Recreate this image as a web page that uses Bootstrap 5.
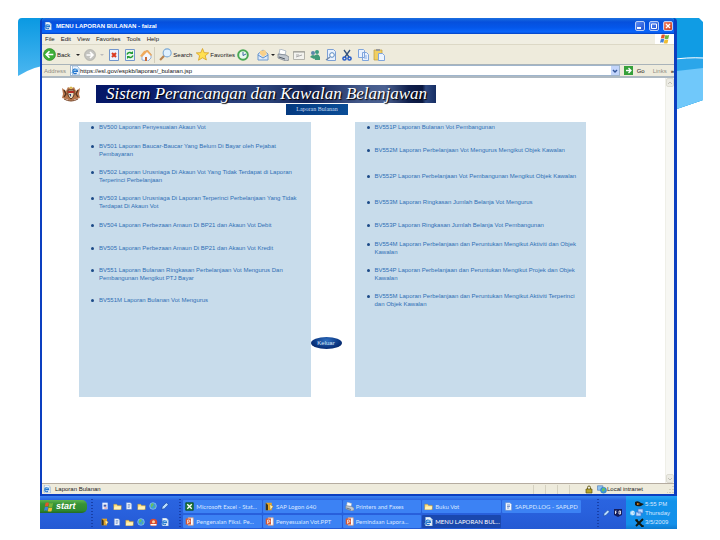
<!DOCTYPE html>
<html lang="ms">
<head>
<meta charset="utf-8">
<meta name="viewport" content="width=device-width, initial-scale=1">
<title>MENU LAPORAN BULANAN</title>
<link href="https://cdn.jsdelivr.net/npm/bootstrap@5.3.0/dist/css/bootstrap.min.css" rel="stylesheet">
<style>
body{font-family:"Liberation Sans",Arial,sans-serif;font-size:6px;line-height:8px;color:#222;background:#fff}
a{text-decoration:none;color:inherit}
button{font:inherit;color:inherit;border:0;background:none;padding:0}
svg{display:block;flex:none}
.slide{padding:18px 43px 11px 40px}
.backdrop{position:absolute;top:18px;left:18px;right:17px;height:92px;z-index:-1}
.win{border:solid #0c3fc0;border-width:0 3px 2px 2px;border-radius:4px 4px 0 0}
.titlebar{height:16px;padding:0 1px 0 2px;background:linear-gradient(#1b6fe0 0,#0650dc 25%,#0457ea 60%,#0a66fb 88%,#0340c0);border-radius:4px 4px 0 0;color:#fff;font-weight:bold}
.winbtn{width:10px;height:10px;border:1px solid #b9cdf6;border-radius:2px;background:linear-gradient(135deg,#5c8df5,#1d4fd0)}
.winbtn.shut{background:linear-gradient(135deg,#f0866a,#cc3a1c)}
.beige{background:#eeebdc}
.menubar{height:11px;background:#f0eee2;border-bottom:1px solid #dcd8c6}
.menubar nav{padding-left:3px;gap:6px}
.flagbox{width:19px;background:#fff}
.toolbar{height:20px;padding-left:1px;border-bottom:1px solid #a9b3b9}
.tb{width:16px;height:16px;display:flex;align-items:center;justify-content:center}
.tb.wide{width:auto;justify-content:flex-start;gap:1px}
.drop{width:8px;height:16px;display:flex;align-items:center;justify-content:center}
.drop.slim{width:4px}
.drop::before{content:"";border:solid transparent;border-width:2px 2px 0;border-top-color:#222}
.drop.dim::before{border-top-color:#bbb}
.vline{width:1px;height:16px;background:#d3cfbd}
.addr{height:13px;padding-left:2px;border-bottom:2px solid #aeb9c2}
.addr label,.dimtext{color:#8f8d84}
.urlbox{height:11px;border:1px solid #9fb5cc;background:#fff}
.urlbox input{border:0;padding:0;background:transparent;font-size:6px;line-height:8px;min-width:0;color:#111;outline:0}
.listbtn{width:8px;height:9px;background:#c3d5fb;display:flex;align-items:center;justify-content:center}
.page{background:#fff}
.sheet{padding:7px 79px 0 19px}
.banner{margin-left:15px;width:340px;height:18px;padding-left:10px;font:italic 17px/18px "Liberation Serif","Times New Roman",serif;color:#fff;text-shadow:1px 1px 1px #000;white-space:nowrap;background:linear-gradient(90deg,#051767 0,#071a6b 15%,#253a7c 30%,#2b4379 50%,#142458 62%,#43598a 78%,#4b6191 85%,#101f4c 92%,#0b1840 96%,#2e4880 97%,#162d63)}
.crumb{width:62px;height:11px;background:linear-gradient(90deg,#053a80,#0a4d97);color:#c9dcf2;font:6px/11px "Liberation Serif",serif;text-align:center}
.crumbrow{padding:1px 13px 0 0}
.lists{padding:7px 0 0 18px}
.panel{flex:1 1 0;height:275px;margin:0;padding:0 4px 0 12px;list-style:none;background:#c8dceb;color:#2f6fb5;display:grid;grid-template-rows:15px 26px 26px 26px 20px 26px 26px 26px;align-items:center}
.panel li:first-child{align-self:start;padding-top:1px}
.panel li{display:flex;gap:5px}
.panel li::before{content:"";flex:none;width:3px;height:3px;margin-top:3px;border-radius:50%;background:#1c4a87}
.middle{width:44px;padding-top:215px}
.exit{width:31px;height:12px;border-radius:50%;background:radial-gradient(ellipse at 50% 30%,#2e6fc0,#0a3580 60%,#041c52);color:#dbe8fa;line-height:12px;text-align:center}
.scroll{width:9px;background:#f7f7f3;border-left:1px solid #efefe8}
.scroll button{width:8px;height:9px;background:#ecebe4;border:1px solid #dddcd2;border-radius:2px;display:flex;align-items:center;justify-content:center}
.status{height:11px;border-top:1px solid #b5aca0;padding-left:1px}
.status .cell{width:12px;height:9px;border-left:1px solid #d5d1c0}
.taskbar{height:33px;background:linear-gradient(#3b83f2 0,#2a64e0 12%,#2860dc 55%,#2459d3 100%);color:#d8e6ff}
.start{width:48px;height:13px;margin-top:4px;border-radius:0 5px 5px 0;background:linear-gradient(#5db652,#389336 30%,#2f8a30 80%,#226a25);color:#fff;font-size:9px;line-height:11px;font-weight:bold;font-style:italic;padding-left:4px;gap:2px}
.grip{width:2px;margin:3px 0 1px;background:repeating-linear-gradient(#173fa8 0 1px,transparent 1px 3px)}
.quick{display:grid;grid-template-columns:repeat(6,12px);grid-template-rows:16px 16px;padding:2px 8px 0 6px;place-items:center}
.tasks{font-family:Lato,"Liberation Sans",sans-serif;display:grid;grid-template-columns:repeat(5,minmax(0,1fr));grid-auto-rows:13px;gap:2px 1px;padding:4px 16px 0 2px}
.tasks button{display:flex;align-items:center;gap:2px;padding:0 2px;background:#3c82f4;border-radius:1px;white-space:nowrap}
.tasks button.on{background:#1a48ae;color:#fff}
.tray{width:52px;background:linear-gradient(#27a5f4,#1192ea 15%,#1490ea 85%,#0f7bd0);padding:4px 7px 0 4px}
.clock{line-height:9px;text-align:left}
</style>
<script src="https://cdn.jsdelivr.net/npm/bootstrap@5.3.0/dist/js/bootstrap.bundle.min.js"></script>
</head>
<body>
<svg width="0" height="0" class="position-absolute" aria-hidden="true">
<defs>
<symbol id="ie" viewBox="0 0 12 12"><path d="M2 0h6l3 3v9H2z" fill="#eef5fd" stroke="#7ba2cd" stroke-width=".8"/><path d="M2.500 7h6a3 3 0 1 0-1 2.400" fill="none" stroke="#2374cc" stroke-width="1.700"/><path d="M0 10Q4 3 10 4" fill="none" stroke="#69b6ea" stroke-width="1"/></symbol>
<symbol id="flag" viewBox="0 0 12 12"><path d="M2 1q2-1 4 0L5 5.500q-2-1-4 0z" fill="#e5562a"/><path d="M6.500 1.200q2 1 4.500 0l-1 4.500q-2 1-4.500 0z" fill="#72b63c"/><path d="M1 6.300q2-1 4 0L4 10.500q-2-1-4 0z" fill="#3f80db"/><path d="M5.500 6.500q2 1 4.500 0L9 11q-2 1-4.500 0z" fill="#efbd34"/></symbol>
<symbol id="folder" viewBox="0 0 12 12"><path d="M1 3h4l1 1.500h5V10H1z" fill="#ffdf7c" stroke="#b78d2b" stroke-width=".6"/><path d="M2 6h9l-1 4H1z" fill="#fff2b8"/></symbol>
<symbol id="sheet" viewBox="0 0 12 12"><path d="M2 1h6l2 2v8H2z" fill="#f4f8ff" stroke="#7293c4" stroke-width=".7"/><path d="M4 4h4M4 6h4M4 8h3" stroke="#3866b4" stroke-width=".9"/></symbol>
<symbol id="xl" viewBox="0 0 12 12"><path d="M1 1h10v10H1z" fill="#1f7a37" stroke="#0b4920"/><path d="M3 3l6 6M9 3L3 9" stroke="#fff" stroke-width="1.800"/></symbol>
<symbol id="ppt" viewBox="0 0 12 12"><path d="M4 1h7v10H4z" fill="#fff" stroke="#c98"/><path d="M1 2h7v8H1z" fill="#d9582e"/><path d="M3.500 9V4H5a1.400 1.400 0 0 1 0 3H3.500" fill="none" stroke="#fff" stroke-width="1"/></symbol>
<symbol id="sap" viewBox="0 0 12 12"><path d="M1 1h8v10H1z" fill="#e8a826"/><path d="M1 1l3 3v7H1z" fill="#3a3524"/><path d="M6 3l5 3-4 5z" fill="#fff0a8" stroke="#a66d0d" stroke-width=".6"/></symbol>
<symbol id="printer" viewBox="0 0 12 12"><path d="M3 0l6 2-1 4-6-1z" fill="#fff" stroke="#99a9ba" stroke-width=".7"/><path d="M1 5l8 1 3 2v3l-3 1-8-3z" fill="#c3c9d0" stroke="#737b85" stroke-width=".7"/><path d="M2 8l6 2" stroke="#535c66"/></symbol>
<symbol id="pen" viewBox="0 0 12 12"><path d="M1 11l1-4 6-6 3 3-6 6z" fill="#b8dcff" stroke="#123a86" stroke-width=".8"/></symbol>
<symbol id="globe" viewBox="0 0 12 12"><circle cx="6" cy="6" r="5" fill="#3c99df" stroke="#bfe3fb" stroke-width=".8"/><path d="M3 3q3-2 4 0t-2 3q0 3-2 1zM8 6l2 1-2 3z" fill="#66c160"/></symbol>
<symbol id="netglobe" viewBox="0 0 12 12"><path d="M0 1h7v6H0z" fill="#8fc4f2" stroke="#4a76b4" stroke-width=".8"/><circle cx="8" cy="7" r="4" fill="#3c99df" stroke="#2c6aa8" stroke-width=".6"/><path d="M6 5q3-2 4 0t-2 3q0 2-2 0z" fill="#66c160"/></symbol>
<symbol id="red" viewBox="0 0 12 12"><circle cx="6" cy="6" r="5" fill="#d84a33"/><path d="M2 8h8v2H2z" fill="#fff"/><circle cx="6" cy="5" r="2" fill="#ffd3a0"/></symbol>
<symbol id="desk" viewBox="0 0 12 12"><path d="M2 1h8v10H2z" fill="#e7f0ff"/><path d="M4 4h4v3H4z" fill="#4458a8"/><path d="M5 9h4" stroke="#d44"/></symbol>
</defs>
</svg>

<svg class="backdrop w-auto" viewBox="0 0 685 92" preserveAspectRatio="none" aria-hidden="true">
<defs><linearGradient id="sky" x2="0" y2="1"><stop stop-color="#0a99e2"/><stop offset="1" stop-color="#4bb6f0"/></linearGradient></defs>
<path d="M4 0H40V45Q15 48 0 58V4Q0 0 4 0z" fill="url(#sky)"/>
<path d="M650 0h31l4 4v78l-35 12z" fill="#109ce4"/>
<path d="M650 41l35-2v43l-35 12z" fill="#2ba6ea"/>
<path d="M650 54l35-4v32l-35 12z" fill="#70c8fa"/>
<path d="M650 42q20-3 35-2" stroke="#fff" fill="none"/>
</svg>

<div class="slide min-vh-100 d-flex flex-column">
<main class="win flex-grow-1 d-flex flex-column">
  <header class="titlebar d-flex align-items-center gap-1">
    <svg width="8" height="8"><use href="#ie"/></svg>
    <span class="flex-grow-1">MENU LAPORAN BULANAN - faizal</span>
    <span class="d-flex gap-1">
      <button class="winbtn" aria-label="Minimize"><svg width="8" height="8"><path d="M1 6h4" stroke="#fff" stroke-width="2"/></svg></button>
      <button class="winbtn" aria-label="Maximize"><svg width="8" height="8"><path d="M1.500 2h5v4.500h-5z" fill="none" stroke="#fff"/></svg></button>
      <button class="winbtn shut" aria-label="Close"><svg width="8" height="8"><path d="M2 2l4 4M6 2L2 6" stroke="#fff" stroke-width="1.300"/></svg></button>
    </span>
  </header>

  <div class="menubar d-flex justify-content-between">
    <nav class="d-flex align-items-center"><a href="#">File</a><a href="#">Edit</a><a href="#">View</a><a href="#">Favorites</a><a href="#">Tools</a><a href="#">Help</a></nav>
    <div class="flagbox d-flex align-items-center justify-content-center"><svg width="10" height="10"><use href="#flag"/></svg></div>
  </div>

  <div class="toolbar beige d-flex align-items-center">
    <button class="tb wide"><svg width="13" height="13" viewBox="0 0 12 12"><circle cx="6" cy="6" r="5.500" fill="#3eae36" stroke="#2b8527" stroke-width=".6"/><path d="M9.500 6H3M6 3L3 6l3 3" fill="none" stroke="#fff" stroke-width="1.600"/></svg>Back</button>
    <button class="drop ms-1" aria-label="Back list"></button>
    <button class="tb" aria-label="Forward"><svg width="12" height="12"><circle cx="6" cy="6" r="5.500" fill="#c4c4c0" stroke="#a5a5a0" stroke-width=".6"/><path d="M2.500 6H9M6 3l3 3-3 3" fill="none" stroke="#fff" stroke-width="1.600"/></svg></button>
    <button class="drop dim" aria-label="Forward list"></button>
    <button class="tb" aria-label="Stop"><svg width="12" height="12"><path d="M1.500.5h9v11h-9z" fill="#eaf2fd" stroke="#7296cc"/><path d="M4 4l4 4M8 4L4 8" stroke="#db3a1f" stroke-width="2"/></svg></button>
    <button class="tb" aria-label="Refresh"><svg width="12" height="12"><path d="M1.500.5h9v11h-9z" fill="#eaf6ee" stroke="#7296cc"/><path d="M3 5.500a3 3 0 0 1 5-1M9 6.500a3 3 0 0 1-5 1" fill="none" stroke="#229b35" stroke-width="1.500"/><path d="M9 2v3H6zM3 10V7h3z" fill="#229b35"/></svg></button>
    <button class="tb" aria-label="Home"><svg width="12" height="12"><path d="M2 6v5l6 1 3-3V5L7 1z" fill="#f3f7ff" stroke="#7094cb" stroke-width=".7"/><path d="M0 7l4-5 4-1 4 5-1 1-4-4-5 5z" fill="#f0aa5c"/><path d="M5 8h2v4H5z" fill="#c96a34"/></svg></button>
    <span class="vline"></span>
    <button class="tb wide ms-1"><svg width="13" height="13" viewBox="0 0 12 12"><path d="M1 11l4-4" stroke="#b98450" stroke-width="2"/><circle cx="7.500" cy="4.500" r="3.700" fill="#dff1ff" stroke="#7ba8d4"/></svg>Search</button>
    <button class="tb wide ms-1"><svg width="13" height="13" viewBox="0 0 12 12"><path d="M6 .5l1.500 3.800 4.200.2-3.200 2.700L9.600 11 6 9l-3.700 2.300 1-4.200L.3 4.500l4.100-.2z" fill="#ffe052" stroke="#d39c1b" stroke-width=".7"/></svg>Favorites</button>
    <button class="tb" aria-label="History"><svg width="12" height="12"><circle cx="6" cy="6" r="4.800" fill="#e9f8ee" stroke="#48a854" stroke-width="2"/><path d="M6 3v3.500L9 5" fill="none" stroke="#3c6aa0"/></svg></button>
    <button class="tb ms-1" aria-label="Mail"><svg width="12" height="12"><path d="M1 5l5-4 5 4v6H1z" fill="#dbe9fc" stroke="#6f9acd"/><path d="M3 2l5-1 2 4-4 3-3-3z" fill="#f8d08a"/><path d="M1 6l5 3 5-3" fill="none" stroke="#5d8fc8"/></svg></button>
    <button class="drop slim" aria-label="Mail list"></button>
    <button class="tb" aria-label="Print"><svg width="12" height="12"><use href="#printer"/></svg></button>
    <button class="tb" aria-label="Edit"><svg width="12" height="12"><path d="M.5 2.500h11v8H.5z" fill="#f2f2ee" stroke="#b3b3ab"/><path d="M0 3h12" stroke="#9a9a92"/><path d="M3 8l6-2M3 6h3" stroke="#aaa"/></svg></button>
    <button class="tb" aria-label="Discuss"><svg width="12" height="12"><circle cx="4" cy="4" r="2" fill="#5c87ac"/><circle cx="8" cy="3" r="2" fill="#3b9b80"/><path d="M1 8q3-4 6 0l-2 2zM5 7q4-4 6 1v3H6z" fill="#3f9a78"/></svg></button>
    <button class="tb" aria-label="Research"><svg width="12" height="12"><path d="M2.500.5h6l2 2v9h-8z" fill="#e8f1fe" stroke="#7ca0d5"/><circle cx="7" cy="6" r="2.300" fill="#fff" stroke="#5588c0"/><path d="M5 8l-4 3" stroke="#738ba8" stroke-width="1.500"/></svg></button>
    <button class="tb" aria-label="Cut"><svg width="12" height="12"><path d="M3 1l5 7M9 1L4 8" stroke="#35547e" stroke-width="1.300"/><circle cx="3.500" cy="9.500" r="1.600" fill="none" stroke="#2058c8" stroke-width="1.500"/><circle cx="8.500" cy="9.500" r="1.600" fill="none" stroke="#2058c8" stroke-width="1.500"/></svg></button>
    <button class="tb" aria-label="Copy"><svg width="12" height="12"><path d="M1.500.5h5l1 1v7h-6zM5.500 3.500h4l2 2v6h-6z" fill="#e9f2ff" stroke="#7fa5dc"/><path d="M7 7h3M7 9h3" stroke="#8aaee0"/></svg></button>
    <button class="tb" aria-label="Paste"><svg width="12" height="12"><path d="M1 1h8v10H1z" fill="#f1cf62" stroke="#bd9b3c" stroke-width=".7"/><path d="M3 0h4v2H3z" fill="#999"/><path d="M5.500 4.500h4l2 2v5h-6z" fill="#edf5ff" stroke="#7fa5dc"/></svg></button>
  </div>

  <div class="addr beige d-flex align-items-center">
    <label for="url">Address</label>
    <div class="urlbox d-flex align-items-center flex-grow-1 ms-1">
      <svg width="9" height="9"><use href="#ie"/></svg>
      <input id="url" class="flex-grow-1" value="https://esl.gov/espkb/laporan/_bulanan.jsp">
      <button class="listbtn" aria-label="Address list"><svg width="6" height="6"><path d="M1 2l2 2 2-2" fill="none" stroke="#34569a" stroke-width="1.500"/></svg></button>
    </div>
    <button class="d-flex align-items-center gap-1 ms-1"><svg width="9" height="9"><path d="M0 0h9v9H0z" fill="#36a03a"/><path d="M2 4.500h5M4.500 2L7 4.500 4.500 7" fill="none" stroke="#fff" stroke-width="1.300"/></svg>Go</button>
    <span class="dimtext ms-2">Links</span><b class="ms-1">»</b>
  </div>

  <div class="page flex-grow-1 d-flex">
    <div class="sheet flex-grow-1">
      <div class="d-flex">
        <svg width="20" height="17" viewBox="0 0 20 17" role="img" aria-label="Jata Negara"><path d="M1 3l4 3 2-4 3 2 3-2 2 4 4-3-1 6 1 4-4 1-5 2-5-2-4-1 1-4z" fill="#b8774d"/><path d="M7 5h6v5q-1 3-3 4-2-1-3-4z" fill="#e8dbc0" stroke="#593018"/><path d="M7 6h6v2H7z" fill="#b33025"/><path d="M8 9h2v3z" fill="#2b3d7c"/><path d="M3 5l2 4-2 3M17 5l-2 4 2 3" stroke="#51321f" fill="none" stroke-width="1.300"/><path d="M8 3q2-3 4 0l-2 1z" fill="#d9b94a"/><path d="M3 14q7 4 14 0" stroke="#794424" fill="none"/></svg>
        <h1 class="banner mb-0">Sistem Perancangan dan Kawalan Belanjawan</h1>
      </div>
      <div class="crumbrow d-flex justify-content-center"><a href="#" class="crumb">Laporan Bulanan</a></div>
      <div class="lists d-flex">
        <ul class="panel">
          <li><a href="#">BV500 Laporan Penyesuaian Akaun Vot</a></li>
          <li><a href="#">BV501 Laporan Baucar-Baucar Yang Belum Di Bayar oleh Pejabat Pembayaran</a></li>
          <li><a href="#">BV502 Laporan Urusniaga Di Akaun Vot Yang Tidak Terdapat di Laporan Terperinci Perbelanjaan</a></li>
          <li><a href="#">BV503 Laporan Urusniaga Di Laporan Terperinci Perbelanjaan Yang Tidak Terdapat Di Akaun Vot</a></li>
          <li><a href="#">BV504 Laporan Perbezaan Amaun Di BP21 dan Akaun Vot Debit</a></li>
          <li><a href="#">BV505 Laporan Perbezaan Amaun Di BP21 dan Akaun Vot Kredit</a></li>
          <li><a href="#">BV551 Laporan Bulanan Ringkasan Perbelanjaan Vot Mengurus Dan Pembangunan Mengikut PTJ Bayar</a></li>
          <li><a href="#">BV551M Laporan Bulanan Vot Mengurus</a></li>
        </ul>
        <div class="middle"><button class="exit">Keluar</button></div>
        <ul class="panel">
          <li><a href="#">BV551P Laporan Bulanan Vot Pembangunan</a></li>
          <li><a href="#">BV552M Laporan Perbelanjaan Vot Mengurus Mengikut Objek Kawalan</a></li>
          <li><a href="#">BV552P Laporan Perbelanjaan Vot Pembangunan Mengikut Objek Kawalan</a></li>
          <li><a href="#">BV553M Laporan Ringkasan Jumlah Belanja Vot Mengurus</a></li>
          <li><a href="#">BV553P Laporan Ringkasan Jumlah Belanja Vot Pembangunan</a></li>
          <li><a href="#">BV554M Laporan Perbelanjaan dan Peruntukan Mengikut Aktiviti dan Objek Kawalan</a></li>
          <li><a href="#">BV554P Laporan Perbelanjaan dan Peruntukan Mengikut Projek dan Objek Kawalan</a></li>
          <li><a href="#">BV555M Laporan Perbelanjaan dan Peruntukan Mengikut Aktiviti Terperinci dan Objek Kawalan</a></li>
        </ul>
      </div>
    </div>
    <div class="scroll d-flex flex-column justify-content-between">
      <button aria-label="Scroll up"><svg width="6" height="6"><path d="M1 4l2-2 2 2" fill="none" stroke="#c0bfb5"/></svg></button>
      <button aria-label="Scroll down"><svg width="6" height="6"><path d="M1 2l2 2 2-2" fill="none" stroke="#c0bfb5"/></svg></button>
    </div>
  </div>

  <footer class="status beige d-flex align-items-center">
    <svg width="8" height="8"><use href="#ie"/></svg>
    <span class="flex-grow-1 ms-1">Laporan Bulanan</span>
    <span class="cell"></span><span class="cell"></span><span class="cell"></span><span class="cell"></span>
    <svg width="8" height="9" class="ms-1 me-1"><path d="M2.500 4V2.500a1.500 1.500 0 0 1 3 0V4" fill="none" stroke="#6c6422"/><path d="M1 4h6v4H1z" fill="#b9a52a" stroke="#5b5314" stroke-width=".7"/></svg>
    <svg width="10" height="9"><use href="#netglobe"/></svg>
    <span class="me-4 text-nowrap">Local intranet</span>
    <svg width="7" height="8"><path d="M6 1v1M6 4v1M6 7v1M3 4v1M3 7v1M0 7v1" stroke="#b7b29c"/></svg>
  </footer>
</main>

<footer class="taskbar d-flex">
  <button class="start d-flex align-items-center"><svg width="10" height="10"><use href="#flag"/></svg>start</button>
  <span class="grip ms-1"></span>
  <div class="quick">
    <svg width="8" height="8"><use href="#desk"/></svg><svg width="9" height="9"><use href="#folder"/></svg><svg width="8" height="8"><use href="#sheet"/></svg><svg width="9" height="9"><use href="#folder"/></svg><svg width="8" height="8"><use href="#globe"/></svg><svg width="8" height="8"><use href="#pen"/></svg>
    <svg width="8" height="8"><use href="#sap"/></svg><svg width="8" height="8"><use href="#sheet"/></svg><svg width="9" height="9"><use href="#folder"/></svg><svg width="8" height="8"><use href="#globe"/></svg><svg width="9" height="9"><use href="#red"/></svg><svg width="8" height="8"><use href="#ie"/></svg>
  </div>
  <span class="grip"></span>
  <div class="tasks flex-grow-1">
    <button><svg width="9" height="9"><use href="#xl"/></svg>Microsoft Excel - Stat...</button>
    <button><svg width="9" height="9"><use href="#sap"/></svg>SAP Logon 640</button>
    <button><svg width="9" height="9"><use href="#printer"/></svg>Printers and Faxes</button>
    <button><svg width="9" height="9"><use href="#folder"/></svg>Buku Vot</button>
    <button><svg width="9" height="9"><use href="#sheet"/></svg>SAPLPD.LOG - SAPLPD</button>
    <button><svg width="9" height="9"><use href="#ppt"/></svg>Pengenalan Fiksi. Pe...</button>
    <button><svg width="9" height="9"><use href="#ppt"/></svg>Penyesuaian Vot.PPT</button>
    <button><svg width="9" height="9"><use href="#ppt"/></svg>Pemindaan Lapora...</button>
    <button class="on"><svg width="9" height="9"><use href="#ie"/></svg>MENU LAPORAN BUL...</button>
  </div>
  <span class="grip"></span>
  <div class="d-flex align-items-center gap-1 ms-1 me-1">
    <svg width="7" height="8"><use href="#pen"/></svg>
    <svg width="8" height="8"><path d="M0 0h8v6L4 8 0 6z" fill="#141d5c"/><path d="M1.500 2v3M1.500 2h1M1.500 3.500h1M5 2v3h1.500V2z" stroke="#fff" fill="none" stroke-width=".8"/></svg>
  </div>
  <div class="tray d-flex justify-content-between">
    <svg width="14" height="27"><path d="M5 2q3-2 6 1l3 1-3 2q-4 1-6-1z" fill="#1b1a14"/><path d="M7 3l3 1-3 1z" fill="#f08a1c"/><circle cx="2.500" cy="13" r="2.500" fill="#9bd3fb"/><path d="M3.500 11L1.500 13l2 2" stroke="#fff" fill="none"/><path d="M8 9h5v4H8zM6 12h5v4H6z" fill="#bcdcff" stroke="#4777cf" stroke-width=".7"/><path d="M6 20l7 7M13 19l-7 7" stroke="#10180f" stroke-width="2"/><path d="M5 20h3M11 26h3" stroke="#10180f"/></svg>
    <div class="clock">5:55 PM<br>Thursday<br>3/5/2009</div>
  </div>
</footer>
</div>
</body>
</html>
